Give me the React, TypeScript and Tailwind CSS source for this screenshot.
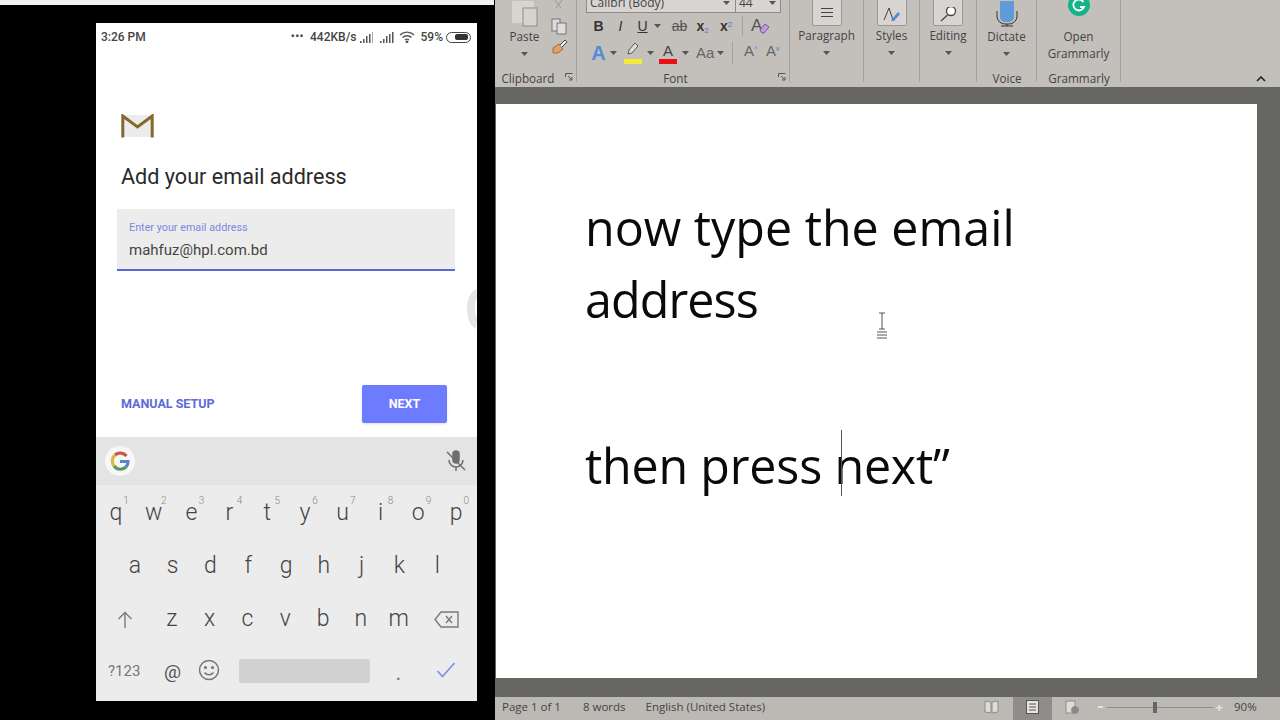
const Tiny = ({ className = '' }: { className?: string }) => (
  <svg width="7" height="4" viewBox="0 0 7 4" className={className}>
    <path d="M0 0h7L3.5 4z" fill="#555" />
  </svg>
);

const Launcher = () => (
  <svg width="8" height="8" viewBox="0 0 8 8" fill="none" stroke="#555" className="absolute right-[4px] bottom-[6px]">
    <path d="M.5 4V.5h7" />
    <path d="M3 3l3.5 3.5M4 7h3V4" />
  </svg>
);

function Group({ width, label, launcher, children }: { width: string; label?: string; launcher?: boolean; children: React.ReactNode }) {
  return (
    <div className="relative h-[87px] shrink-0">
      <div className={`flex h-[82px] flex-col border-r border-[#a5a29e] ${width}`}>
        <div className="relative flex-1 overflow-hidden">{children}</div>
      </div>
      {label && (
        <div className={`absolute bottom-[1px] left-0 right-0 text-center text-[11.7px] leading-[16px] text-[#444] ${launcher ? 'pr-[16px]' : ''}`}>
          {label}
        </div>
      )}
      {launcher && <Launcher />}
    </div>
  );
}

function BigButton({ label, children }: { label: string; children: React.ReactNode }) {
  return (
    <div className="flex flex-col items-center">
      <div className="flex h-[26px] items-end justify-center">{children}</div>
      <div className="mt-[1px] text-[11.7px] leading-[17px] text-[#444]">{label}</div>
      <Tiny className="mt-[7px]" />
    </div>
  );
}

function Ribbon() {
  return (
    <div className="flex h-[87px] bg-[#c3bfba] font-['Open_Sans',sans-serif]">
      <Group width="w-[82px]" label="Clipboard" launcher>
        <div className="flex flex-col items-center pr-[22px] pt-[1px]">
          <div className="flex h-[26px] items-end">
            <svg width="28" height="26" viewBox="0 0 28 26">
              <rect x="1" y="-6" width="22" height="28" fill="#d8d4d0" />
              <rect x="12" y="7" width="14" height="18" fill="#d6d3cf" stroke="#8f8c89" />
            </svg>
          </div>
          <div className="mt-[1px] text-[11.7px] leading-[17px] text-[#444]">Paste</div>
          <Tiny className="mt-[7px]" />
        </div>
        <svg width="16" height="54" viewBox="0 0 16 54" fill="none" className="absolute left-[56px] top-[0px]">
          <path d="M4 0l6 8M11 0l-6 8" stroke="#9a9794" />
          <rect x="1" y="19" width="8" height="12" fill="#ddd" stroke="#777" />
          <rect x="6" y="23" width="9" height="11" fill="#ddd" stroke="#777" />
          <path d="M2 48l6-4 4 5-5 4H2z" fill="#e0a26a" stroke="#a06a3a" />
          <path d="M9 45l5-5 2 2-5 5" fill="#eee" stroke="#444" />
        </svg>
      </Group>
      <Group width="w-[213px]" label="Font" launcher>
        <div className="absolute left-[9px] top-[-8px] flex h-[21px] w-[196px] text-[12px] leading-[19px] text-[#444]">
          <div className="flex w-[150px] items-center justify-between border border-[#8d8a87] bg-[#d7d4d1] pl-[3px] pr-[5px]">
            Calibri (Body) <Tiny />
          </div>
          <div className="flex w-[45px] items-center justify-between border border-l-0 border-[#8d8a87] bg-[#d7d4d1] pl-[3px] pr-[4px]">
            44 <Tiny />
          </div>
        </div>
        <div className="absolute left-[10px] top-[16px] flex items-center font-['Liberation_Sans',sans-serif] text-[14px] leading-[18px] text-[#333]">
          <span className="w-[23px] text-center font-bold">B</span>
          <span className="w-[21px] text-center italic">I</span>
          <span className="w-[23px] text-center underline">U</span>
          <Tiny className="mr-[7px]" />
          <span className="w-[23px] text-center text-[#555] line-through">ab</span>
          <span className="w-[23px] text-center font-bold">x<sub className="text-[8px] font-normal text-[#4a7fc0]">2</sub></span>
          <span className="w-[24px] text-center font-bold">x<sup className="text-[8px] font-normal text-[#4a7fc0]">2</sup></span>
          <span className="ml-[4px] h-[20px] w-px bg-[#a5a29e]" />
          <span className="relative ml-[8px] w-[18px] text-[17px] text-[#555]">
            A
            <svg width="11" height="11" viewBox="0 0 11 11" className="absolute left-[8px] top-[6px]">
              <path d="M1 7l5-6 4 3-5 6H3z" fill="#b9a0d8" stroke="#7b4fae" />
            </svg>
          </span>
        </div>
        <div className="absolute left-[12px] top-[41px] flex items-center font-['Liberation_Sans',sans-serif] text-[#444]">
          <span className="w-[19px] text-center text-[20px] font-bold leading-[22px] text-[#4f8ed6]">A</span>
          <Tiny className="ml-[2px] mr-[7px]" />
          <span className="relative flex h-[22px] w-[18px] justify-center">
            <svg width="14" height="14" viewBox="0 0 14 14">
              <path d="M2 12l1-4 6-7 3 3-6 7z" fill="#ddd" stroke="#555" />
            </svg>
            <span className="absolute bottom-[0px] h-[5px] w-[18px] bg-[#f3ea3c]" />
          </span>
          <Tiny className="ml-[5px] mr-[5px]" />
          <span className="relative flex h-[22px] w-[18px] justify-center text-[15px] leading-[17px]">
            A
            <span className="absolute bottom-[0px] h-[5px] w-[18px] bg-[#e81010]" />
          </span>
          <Tiny className="ml-[5px] mr-[7px]" />
          <span className="w-[18px] text-[15px] leading-[20px] text-[#666]">Aa</span>
          <Tiny className="ml-[3px] mr-[8px]" />
          <span className="h-[22px] w-px bg-[#a5a29e]" />
          <span className="ml-[11px] w-[22px] text-[15px] leading-[20px] text-[#666]">A<span className="relative top-[-5px] text-[7px] text-[#4a7fc0]">^</span></span>
          <span className="text-[15px] leading-[20px] text-[#666]">A<span className="relative top-[-5px] text-[7px] text-[#4a7fc0]">v</span></span>
        </div>
      </Group>
      <Group width="w-[74px]">
        <BigButton label="Paragraph">
          <div className="flex h-[35px] w-[30px] items-end justify-center rounded-b-[2px] border border-[#9b9895] bg-[#d7d4d1] pb-[6px]">
            <svg width="14" height="12" viewBox="0 0 14 12" stroke="#444"><path d="M1 1.500h12M1 5.500h12M1 9.500h12" /></svg>
          </div>
        </BigButton>
      </Group>
      <Group width="w-[56px]">
        <BigButton label="Styles">
          <div className="flex h-[35px] w-[30px] items-end justify-center rounded-b-[2px] border border-[#9b9895] bg-[#d7d4d1] pb-[3px]">
            <svg width="18" height="15" viewBox="0 0 18 15"><path d="M1 13L6 1l4 12" fill="none" stroke="#444" /><path d="M9 12l6-7 2 2-6 7H8z" fill="#4f8ed6" /></svg>
          </div>
        </BigButton>
      </Group>
      <Group width="w-[57px]">
        <BigButton label="Editing">
          <div className="flex h-[35px] w-[30px] items-end justify-center rounded-b-[2px] border border-[#9b9895] bg-[#d7d4d1] pb-[3px]">
            <svg width="18" height="15" viewBox="0 0 18 15" fill="none" stroke="#444" strokeWidth="1.3"><circle cx="12" cy="4" r="4.500" fill="#fff" /><path d="M8.500 8L2 14" /></svg>
          </div>
        </BigButton>
      </Group>
      <Group width="w-[60px]" label="Voice">
        <div className="pt-[1px]">
          <BigButton label="Dictate">
            <svg width="22" height="26" viewBox="0 0 22 26">
              <path d="M4-4h14v20a5 5 0 0 1-5 5H9a5 5 0 0 1-5-5z" fill="#5f9bd8" />
              <path d="M1 10v6a8 8 0 0 0 8 7h4a8 8 0 0 0 8-7v-6M11 23v2M5 25h12" fill="none" stroke="#333" />
            </svg>
          </BigButton>
        </div>
      </Group>
      <Group width="w-[84px]" label="Grammarly">
        <div className="flex flex-col items-center">
          <div className="mt-[-10px] flex h-[30px] w-[22px] items-center justify-center">
            <svg width="22" height="22" viewBox="0 0 22 22" fill="none">
              <circle cx="11" cy="11" r="11" fill="#15b38a" />
              <path d="M15.500 8a5.500 5.500 0 1 0 .5 5h-4" stroke="#fff" strokeWidth="1.800" />
            </svg>
          </div>
          <div className="mt-[8px] text-center text-[11.7px] leading-[17px] text-[#444]">Open<br />Grammarly</div>
        </div>
      </Group>
      <div className="relative flex-1">
        <svg width="10" height="6" viewBox="0 0 10 6" fill="none" stroke="#222" strokeWidth="1.600" className="absolute right-[14px] top-[76px]">
          <path d="M1 5l4-4 4 4" />
        </svg>
      </div>
    </div>
  );
}

function StatusBar() {
  return (
    <div className="flex h-[23px] items-center bg-[#bcb9b5] pb-[3px] pl-[7px] font-['Open_Sans',sans-serif] text-[11.5px] text-[#444]">
      <span>Page 1 of 1</span>
      <span className="ml-[22px]">8 words</span>
      <span className="ml-[20px]">English (United States)</span>
      <div className="mb-[-3px] ml-auto flex h-[23px] items-center pb-[3px]">
        <svg width="15" height="14" viewBox="0 0 15 14" className="mr-[14px]" fill="#dedbd8" stroke="#8f8c89">
          <path d="M1 1l6 1v11l-6-1zM14 1L8 2v11l6-1z" />
        </svg>
        <div className="mb-[-3px] flex h-[23px] w-[39px] items-center justify-center bg-[#8f8c89] pb-[3px]">
          <svg width="13" height="14" viewBox="0 0 13 14" fill="#e7e5e2" stroke="#555"><rect x=".5" y=".5" width="12" height="13" /><path d="M3 4h7M3 7h7M3 10h7" /></svg>
        </div>
        <svg width="15" height="14" viewBox="0 0 15 14" className="ml-[13px]" fill="#dedbd8" stroke="#8f8c89">
          <rect x="1" y="1" width="9" height="12" /><circle cx="10" cy="10" r="3.500" fill="#888" />
        </svg>
        <span className="ml-[18px] h-[2px] w-[5px] bg-[#e6e4e1]" />
        <div className="relative ml-[4px] h-px w-[106px] bg-[#8f8c89]">
          <span className="absolute left-[46px] top-[-5px] h-[11px] w-[4px] bg-[#666]" />
        </div>
        <span className="ml-[3px] text-[13px] font-bold leading-none text-[#e6e4e1]">+</span>
        <span className="ml-[11px] mr-[22px] w-[24px] text-[#444]">90%</span>
      </div>
    </div>
  );
}

function WordPane() {
  return (
    <div className="flex w-[785px] shrink-0 flex-col bg-[#666663]">
      <Ribbon />
      <div className="flex-1 pt-[17px] pl-[1px]">
        <div className="relative h-[574px] w-[761px] bg-white pl-[89px] pt-[87px] font-['Open_Sans',sans-serif] text-[48.4px] leading-[72px] text-[#0a0a0a]">
          <div>now type the email</div>
          <div className="tracking-[-0.9px]">address</div>
          <div className="mt-[94px] tracking-[-0.2px]">
            then press <span className="relative inline-block h-0 w-0"><span className="absolute left-[7px] top-[-54px] h-[66px] w-px bg-[#555]" /></span>next”
          </div>
          <svg width="14" height="28" viewBox="0 0 14 28" fill="none" stroke="#555" className="absolute left-[379px] top-[208px]">
            <path d="M4 1h6M7 1v16M4 17h6M2 20h10M2 23h10M2 26h10" />
          </svg>
        </div>
      </div>
      <StatusBar />
    </div>
  );
}

const rows1 = ['q', 'w', 'e', 'r', 't', 'y', 'u', 'i', 'o', 'p'];
const rows2 = ['a', 's', 'd', 'f', 'g', 'h', 'j', 'k', 'l'];
const rows3 = ['z', 'x', 'c', 'v', 'b', 'n', 'm'];
const nums = ['1', '2', '3', '4', '5', '6', '7', '8', '9', '0'];

function Key({ ch, sup }: { ch: string; sup?: string }) {
  return (
    <div className="relative flex h-full w-[37.8px] items-center justify-center text-[23px] font-light text-[#444]">
      {ch}
      {sup && <span className="absolute right-[6px] top-[7px] text-[10px] leading-[12px] text-[#8a8a8a]">{sup}</span>}
    </div>
  );
}

function Keyboard() {
  return (
    <div className="flex-1 bg-[#ececec] font-['Roboto',sans-serif]">
      <div className="flex h-[48px] items-center justify-between bg-[#e4e4e4] pl-[9px] pr-[11px]">
        <div className="flex h-[30px] w-[30px] items-center justify-center rounded-full bg-[#f7f7f7]">
          <svg width="20" height="20" viewBox="0 0 20 20" fill="none" strokeWidth="3.200">
            <path d="M16.500 5A8 8 0 0 0 5 4" stroke="#c8554a" />
            <path d="M5 4a8 8 0 0 0-1 11" stroke="#d9b93e" />
            <path d="M4 15a8 8 0 0 0 12 1" stroke="#5a9a58" />
            <path d="M16 16c1.500-1.500 2-3.500 2-5.500h-8" stroke="#5a83c8" />
          </svg>
        </div>
        <svg width="20" height="22" viewBox="0 0 20 22" fill="none" stroke="#6f6f6f" strokeWidth="1.500">
          <rect x="7" y="1" width="6" height="12" rx="3" fill="#6f6f6f" />
          <path d="M3 10a7 7 0 0 0 14 0M10 17v4M1 2l18 18" />
        </svg>
      </div>
      <div className="flex h-[53px] pt-[3px] pl-[1px]">
        {rows1.map((k, i) => <Key key={k} ch={k} sup={nums[i]} />)}
      </div>
      <div className="flex h-[53px] pt-[4px] pl-[20px]">
        {rows2.map((k) => <Key key={k} ch={k} />)}
      </div>
      <div className="flex h-[54px] items-center pt-[2px] pl-[20px]">
        <div className="flex w-[18px] justify-center">
          <svg width="16" height="17" viewBox="0 0 16 17" fill="none" stroke="#7a7a7a" strokeWidth="1.400"><path d="M8 17V2M1.500 8L8 1.500 14.500 8" /></svg>
        </div>
        <div className="ml-[19px] flex h-full">
          {rows3.map((k) => <Key key={k} ch={k} />)}
        </div>
        <svg width="25" height="17" viewBox="0 0 25 17" fill="none" stroke="#7a7a7a" strokeWidth="1.400" className="ml-[16px]">
          <path d="M7 1h17v15H7L1 8.500zM12 5l6 7M18 5l-6 7" />
        </svg>
      </div>
      <div className="flex h-[52px] items-center pl-[12px]">
        <span className="w-[36px] text-[15px] text-[#777]">?123</span>
        <span className="ml-[20px] mt-[3px] text-[19px] text-[#555]">@</span>
        <svg width="22" height="22" viewBox="0 0 22 22" fill="none" stroke="#777" strokeWidth="1.500" className="ml-[17px] mt-[-2px]">
          <circle cx="11" cy="11" r="9.500" /><path d="M6.500 13.500c2.500 3 6.500 3 9 0" /><circle cx="7.500" cy="8.500" r=".8" /><circle cx="14.500" cy="8.500" r=".8" />
        </svg>
        <div className="ml-[19px] h-[24px] w-[131px] rounded-[2px] bg-[#d2d2d2]" />
        <span className="ml-[26px] mt-[8px] text-[16px] font-bold leading-none text-[#777]">.</span>
        <svg width="20" height="16" viewBox="0 0 20 16" fill="none" stroke="#7f8fe8" strokeWidth="1.600" className="ml-[35px] mt-[-2px]">
          <path d="M1.500 9l5 5.500L18.500 1" />
        </svg>
      </div>
    </div>
  );
}

function Phone() {
  return (
    <div className="relative ml-[96px] mt-[18px] flex h-[678px] w-[381px] flex-col bg-white font-['Roboto',sans-serif]">
      <div className="flex h-[28px] items-center pl-[5px] pr-[6px] text-[12px] font-medium text-[#444]">
        <span>3:26 PM</span>
        <div className="ml-auto flex items-center">
          <span className="mr-[6px] text-[11px] font-bold tracking-[0.5px]">•••</span>
          <span>442KB/s</span>
          <svg width="15" height="11" viewBox="0 0 15 11" fill="#555" className="ml-[2px]"><path d="M1 9h1.500v2H1zM4 7h1.500v4H4zM7 4h1.500v7H7zM10 2h1.500v9H10z" /><path d="M13 0h1v11h-1z" fill="#aaa" /></svg>
          <svg width="15" height="11" viewBox="0 0 15 11" fill="#555" className="ml-[5px]"><path d="M1 9h1.500v2H1zM4 7h1.500v4H4zM7 4h1.500v7H7zM10 2h1.500v9H10zM13 0h1.500v11H13z" /></svg>
          <svg width="16" height="12" viewBox="0 0 16 12" fill="none" stroke="#555" strokeWidth="1.400" className="ml-[5px]"><path d="M1 4a10 10 0 0 1 14 0M3.500 6.500a6.500 6.500 0 0 1 9 0M6 9a3 3 0 0 1 4 0" /><circle cx="8" cy="11" r=".7" /></svg>
          <span className="ml-[6px]">59%</span>
          <span className="ml-[3px] flex h-[11px] w-[25px] items-center justify-end rounded-full border border-[#444] pr-[2px]">
            <span className="h-[6px] w-[13px] rounded-[2px] bg-[#333]" />
          </span>
        </div>
      </div>
      <div className="pl-[25px] pt-[63px]">
        <svg width="33" height="24" viewBox="0 0 33 24" className="block">
          <rect x="1" y="1" width="31" height="22" fill="#ececec" />
          <path d="M1.800 23.500V2L16.500 13 31.200 2v21.500" fill="none" stroke="#84682c" strokeWidth="3" />
        </svg>
      </div>
      <div className="pl-[25px] pt-[24px] text-[21.6px] leading-[30px] text-[#2a2a2a]">Add your email address</div>
      <div className="ml-[21px] mt-[17px] h-[62px] w-[338px] border-b-2 border-[#5b6ad0] bg-[#ececec] pl-[12px] pt-[12px]">
        <div className="text-[10.8px] leading-[14px] text-[#7c88e0]">Enter your email address</div>
        <div className="mt-[6px] text-[15px] leading-[18px] text-[#444]">mahfuz@hpl.com.bd</div>
      </div>
      <div className="mt-[114px] flex items-center justify-between pl-[25px] pr-[30px]">
        <span className="text-[12.5px] font-bold text-[#5c6bd6]">MANUAL SETUP</span>
        <button className="h-[38px] w-[85px] rounded-[2px] bg-[#6d7cff] text-[12.5px] font-bold text-white shadow-sm">NEXT</button>
      </div>
      <div className="mt-[14px] flex flex-1 flex-col"><Keyboard /></div>
      <svg width="11" height="42" viewBox="0 0 11 42" className="absolute right-[0px] top-[265px]">
        <path d="M10 1C4 4 1 12 1 20c0 10 3 18 9 21l1-11c-3-5-3-15 0-22z" fill="#e4e4e4" />
      </svg>
    </div>
  );
}

export default function App() {
  return (
    <div className="flex h-[720px] w-[1280px] overflow-hidden bg-black">
      <div className="w-[495px] shrink-0">
        <div className="mr-px h-[5px] bg-[#f2f2f0]" />
        <Phone />
      </div>
      <WordPane />
    </div>
  );
}
